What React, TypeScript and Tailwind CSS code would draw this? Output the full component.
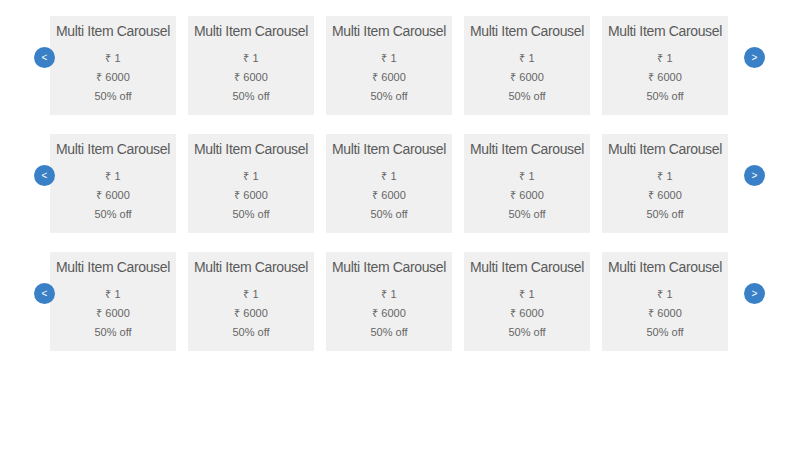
const items = [1, 2, 3, 4, 5]

const Carousel = () => {
    return (
        <div className="relative ml-[50px] w-[678px]">
            <div className="flex gap-3">
                {items.map((i) => (
                    <div key={i} className="w-[126px] h-[99px] bg-[#f0f0f0] text-center text-[#5a5a5a]">
                        <h3 className="pt-[6px] text-[14px] leading-[18px] tracking-[-0.35px] whitespace-nowrap -mx-2">Multi Item Carousel</h3>
                        <div className="mt-[9px] text-[11px] leading-[19px] text-[#666]">
                            <p>₹ 1</p>
                            <p>₹ 6000</p>
                            <p>50% off</p>
                        </div>
                    </div>
                ))}
            </div>
            <button className="absolute left-[-16px] top-[31px] w-[21px] h-[21px] rounded-full bg-[#3a80c6] text-white text-[10px] leading-[21px]">&lt;</button>
            <button className="absolute left-[694px] top-[31px] w-[21px] h-[21px] rounded-full bg-[#3a80c6] text-white text-[10px] leading-[21px]">&gt;</button>
        </div>
    )
}

export default function App() {
    return (
        <div className="w-[800px] h-[450px] bg-white pt-4 flex flex-col gap-[19px] font-['Liberation_Sans',Arial,sans-serif]">
            <Carousel />
            <Carousel />
            <Carousel />
        </div>
    )
}
